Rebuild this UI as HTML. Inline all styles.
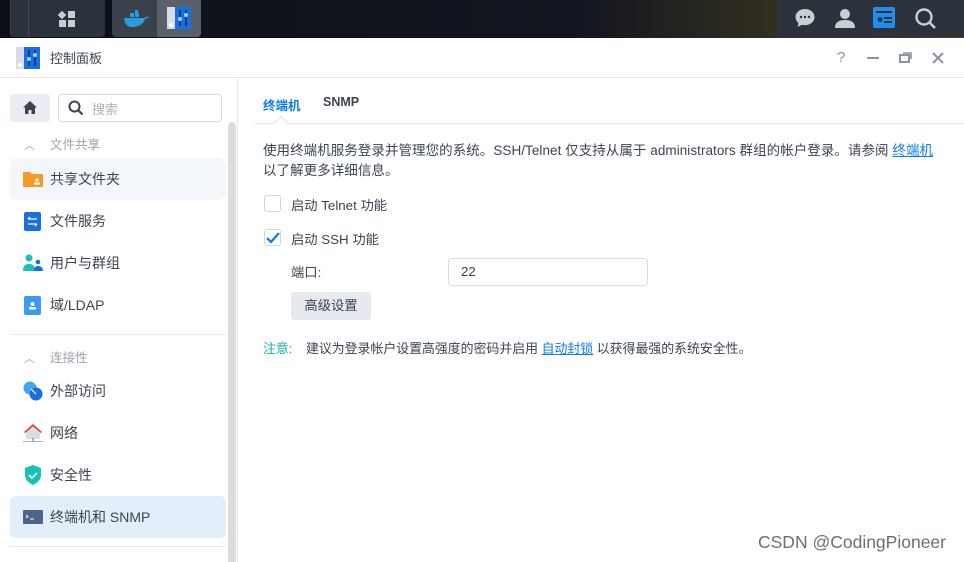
<!DOCTYPE html>
<html><head><meta charset="utf-8"><style>
*{margin:0;padding:0;box-sizing:border-box}
body{width:964px;height:562px;overflow:hidden;background:#fff;font-family:"Liberation Sans","Noto Sans CJK SC",sans-serif;position:relative;color:#3a4452}
.abs{position:absolute}
.top{left:0;top:0;width:964px;height:38px;background:linear-gradient(90deg,#0b0f16 0%,#121620 60%,#3a3420 85%,#4a3f22 100%)}
.tb{background:#2c323b;border-radius:0 0 4px 4px}
.side{left:0;top:78px;width:238px;height:484px;border-right:1px solid #e3e7ec}
.item{position:absolute;left:10px;width:216px;height:42px;border-radius:6px;font-size:14px;line-height:42px;padding-left:40px;color:#3a4452}
.ic{position:absolute;left:13px;top:11px;width:20px;height:20px}
.sec{position:absolute;left:24px;font-size:12.5px;color:#9aa3ad}
.sec span{display:inline-block;width:10px;margin-right:16px;font-size:11px}
.hr{position:absolute;left:10px;width:216px;height:1px;background:#e6e9ee}
.t{font-size:13.3px;color:#3a4452}
.cb{position:absolute;width:17px;height:17px;border:1px solid #cfd6de;border-radius:3px;background:#fff}
a{color:#0a7cf0}
</style></head><body>
<div class="abs top"></div>
<div class="abs tb" style="left:10px;top:0;width:95px;height:37px;border-left:1px solid #3c434d"></div>
<div class="abs" style="left:28px;top:0;width:1px;height:37px;background:#454c56"></div>
<svg class="abs" style="left:57px;top:9px" width="20" height="20" viewBox="0 0 20 20"><rect x="2" y="3" width="6" height="6" transform="rotate(45 5 6)" fill="#c9ced5"/><rect x="11" y="2" width="7" height="7" fill="#c9ced5"/><rect x="2" y="11" width="7" height="7" fill="#c9ced5"/><rect x="11" y="11" width="7" height="7" fill="#c9ced5"/></svg>
<div class="abs tb" style="left:112px;top:0;width:89px;height:37px;background:#3b414a"></div>
<div class="abs" style="left:157px;top:0;width:44px;height:37px;background:#59606a;border-radius:0 0 4px 0"></div>
<svg class="abs" style="left:122px;top:10px" width="28" height="18" viewBox="0 0 28 18"><path d="M2 8 H22 Q25 6 27 7 Q25 9 23 9 Q20 17 10 17 Q3 17 2 8Z" fill="#2a9de0"/><rect x="8" y="3" width="4" height="4" fill="#2a9de0"/><rect x="13" y="3" width="4" height="4" fill="#2a9de0"/><rect x="13" y="0" width="3" height="3" fill="#2a9de0"/></svg>
<svg class="abs" style="left:167px;top:6px" width="24" height="24" viewBox="0 0 24 24"><rect x="0" y="1" width="8" height="22" fill="#d8dde5"/><rect x="8" y="1" width="16" height="22" fill="#1a6fe0"/><circle cx="4" cy="19" r="2" fill="#fff"/><path d="M13 4V20M19 4V20" stroke="#0c2b70" stroke-width="1.5"/><circle cx="13" cy="13" r="2" fill="#9fd0ff"/><circle cx="19" cy="9" r="2" fill="#9fd0ff"/></svg>
<div class="abs tb" style="left:777px;top:0;width:187px;height:37px;border-radius:0 0 0 4px"></div>
<svg class="abs" style="left:794px;top:7px" width="22" height="22" viewBox="0 0 22 22"><path d="M11 2C5.5 2 1.5 5.6 1.5 10c0 2.4 1.2 4.5 3 6l-1 4 4.5-2.3c1 .3 2 .4 3 .4 5.5 0 9.5-3.6 9.5-8S16.5 2 11 2z" fill="#c9ced5"/><circle cx="7" cy="10" r="1.2" fill="#2c323b"/><circle cx="11" cy="10" r="1.2" fill="#2c323b"/><circle cx="15" cy="10" r="1.2" fill="#2c323b"/></svg>
<svg class="abs" style="left:834px;top:7px" width="22" height="22" viewBox="0 0 22 22"><circle cx="11" cy="7" r="5" fill="#c9ced5"/><path d="M1 21c0-6 4-8 10-8s10 2 10 8z" fill="#c9ced5"/></svg>
<svg class="abs" style="left:873px;top:7px" width="22" height="22" viewBox="0 0 22 22"><rect x="0" y="0" width="22" height="21" rx="2" fill="#1f8cf0"/><rect x="3" y="4" width="16" height="2" fill="#2c323b"/><circle cx="7" cy="12.5" r="2.5" fill="#2c323b"/><rect x="11" y="10" width="8" height="2" fill="#2c323b"/><rect x="11" y="14" width="8" height="2" fill="#2c323b"/></svg>
<svg class="abs" style="left:914px;top:7px" width="24" height="24" viewBox="0 0 24 24"><circle cx="10" cy="10" r="7.5" fill="none" stroke="#c9ced5" stroke-width="2.4"/><path d="M15.5 15.5L21 21" stroke="#c9ced5" stroke-width="2.6"/></svg>

<div class="abs" style="left:0;top:38px;width:964px;height:40px;border-bottom:1px solid #e3e7ec;background:#fff"></div>
<svg class="abs" style="left:16px;top:46px" width="24" height="24" viewBox="0 0 24 24"><rect x="0" y="1" width="8" height="22" fill="#d8dde5"/><rect x="8" y="1" width="16" height="22" fill="#1a6fe0"/><circle cx="4" cy="19" r="2" fill="#fff"/><path d="M13 4V20M19 4V20" stroke="#0c2b70" stroke-width="1.5"/><circle cx="13" cy="13" r="2" fill="#9fd0ff"/><circle cx="19" cy="9" r="2" fill="#9fd0ff"/></svg>
<div class="abs" style="left:50px;top:48px;font-size:13px;color:#3a4452">控制面板</div>
<div class="abs" style="left:837px;top:49px;font-size:15px;color:#8a939e">?</div>
<div class="abs" style="left:867px;top:57px;width:12px;height:2px;background:#8a939e"></div>
<svg class="abs" style="left:899px;top:51px" width="14" height="12" viewBox="0 0 14 12"><rect x="1" y="4" width="9" height="7" fill="none" stroke="#8a939e" stroke-width="2"/><path d="M4 2H12V8" fill="none" stroke="#8a939e" stroke-width="1.6"/></svg>
<svg class="abs" style="left:932px;top:52px" width="12" height="12" viewBox="0 0 12 12"><path d="M1 1L11 11M11 1L1 11" stroke="#8a939e" stroke-width="2"/></svg>

<div class="abs side">
<div class="abs" style="left:10px;top:16px;width:40px;height:28px;background:#e9edf2;border-radius:4px"></div>
<svg class="abs" style="left:22px;top:22px" width="16" height="15" viewBox="0 0 16 15"><path d="M8 1L1 7.5H3V14H6.5V10H9.5V14H13V7.5H15Z" fill="#3a4452"/></svg>
<div class="abs" style="left:58px;top:16px;width:164px;height:28px;border:1px solid #d5dbe2;border-radius:4px"></div>
<svg class="abs" style="left:68px;top:22px" width="16" height="16" viewBox="0 0 16 16"><circle cx="6.5" cy="6.5" r="5" fill="none" stroke="#3a4452" stroke-width="2"/><path d="M10 10L14.5 14.5" stroke="#3a4452" stroke-width="2.2"/></svg>
<div class="abs" style="left:92px;top:21px;font-size:13px;color:#aab2bb">搜索</div>
<div class="abs" style="left:228px;top:44px;width:8px;height:440px;background:#dcdcdc;border-radius:4px 4px 0 0"></div>
<div class="sec" style="top:56px"><span>︿</span>文件共享</div>
<div class="item" style="top:80px;background:#f3f7fb"><svg class="ic" viewBox="0 0 20 20"><path d="M0 3h7l2 2h11v13H0z" fill="#f79a28"/><circle cx="14" cy="11" r="1.6" fill="#fff"/><rect x="11" y="13.5" width="6" height="2" fill="#fff"/></svg>共享文件夹</div>
<div class="item" style="top:122px"><svg class="ic" viewBox="0 0 20 20"><rect x="1" y="1" width="17" height="19" rx="2" fill="#1a6fe0"/><path d="M5 8h9M5 8l2-2M14 13H5M14 13l-2 2" stroke="#fff" stroke-width="1.3" fill="none"/></svg>文件服务</div>
<div class="item" style="top:164px"><svg class="ic" viewBox="0 0 20 20"><circle cx="6" cy="5" r="3.5" fill="#16c0c0"/><path d="M0 18c0-6 3-7 6-7s6 1 6 7z" fill="#16c0c0"/><circle cx="15" cy="9" r="2.3" fill="#1a6fe0"/><path d="M11 18c0-4 2-5 4-5s5 1 5 5z" fill="#1a6fe0"/></svg>用户与群组</div>
<div class="item" style="top:206px"><svg class="ic" viewBox="0 0 20 20"><rect x="1" y="1" width="17" height="19" rx="2" fill="#3a9bf0"/><circle cx="9.5" cy="9" r="2" fill="#fff"/><rect x="6" y="12" width="7" height="2.5" fill="#fff"/></svg>域/LDAP</div>
<div class="hr" style="top:256px"></div>
<div class="sec" style="top:269px"><span>︿</span>连接性</div>
<div class="item" style="top:292px"><svg class="ic" viewBox="0 0 20 20"><circle cx="7" cy="7" r="6.5" fill="#3fa8f5"/><circle cx="13" cy="13" r="6.5" fill="#1a6fe0"/><path d="M8 8l5 5" stroke="#fff" stroke-width="1.2"/></svg>外部访问</div>
<div class="item" style="top:334px"><svg class="ic" viewBox="0 0 20 20"><path d="M10 1L1 9h2v7h14V9h2z" fill="#d9dde2"/><path d="M10 1L1 9l1.3 1L10 3.5 17.7 10 19 9z" fill="#e5483d"/><rect x="0" y="18" width="20" height="1" fill="#9fb4c8"/><rect x="9.5" y="15" width="1" height="3" fill="#1a6fe0"/></svg>网络</div>
<div class="item" style="top:376px"><svg class="ic" viewBox="0 0 20 20"><path d="M10 0L18 3v7c0 5-4 8-8 10-4-2-8-5-8-10V3z" fill="#14c1b8"/><path d="M6 10l3 3 5-5" stroke="#fff" stroke-width="1.6" fill="none"/></svg>安全性</div>
<div class="item" style="top:418px;background:#e3eefb"><svg class="ic" viewBox="0 0 20 20"><rect x="0" y="3" width="20" height="14" rx="1" fill="#4a6585"/><path d="M3 8l2 1.5L3 11M7 12h4" stroke="#fff" stroke-width="1" fill="none"/></svg>终端机和 SNMP</div>
<div class="hr" style="top:468px"></div>
</div>

<div class="abs" style="left:263px;top:95px;font-size:12.5px;font-weight:bold;color:#0a7cf0">终端机</div>
<div class="abs" style="left:323px;top:95px;font-size:12.5px;font-weight:bold;color:#3a4452">SNMP</div>
<div class="abs" style="left:255px;top:123px;width:709px;height:1px;background:#dfe4ea"></div>
<div class="abs" style="left:276px;top:118px;width:10px;height:10px;border-left:1px solid #dfe4ea;border-top:1px solid #dfe4ea;background:#fff;transform:rotate(45deg)"></div>
<div class="abs t" style="left:263px;top:141px;line-height:20px;width:700px;font-size:13.5px;letter-spacing:0.05px">使用终端机服务登录并管理您的系统。SSH/Telnet 仅支持从属于 administrators 群组的帐户登录。请参阅 <a href="#">终端机</a><br>以了解更多详细信息。</div>
<div class="cb" style="left:264px;top:195px"></div>
<div class="abs t" style="left:291px;top:195px">启动 Telnet 功能</div>
<div class="cb" style="left:264px;top:229px"></div>
<svg class="abs" style="left:265px;top:230px" width="16" height="16" viewBox="0 0 16 16"><path d="M2 8l4 4 8-9" stroke="#0a7cf0" stroke-width="2.2" fill="none"/></svg>
<div class="abs t" style="left:291px;top:229px">启动 SSH 功能</div>
<div class="abs t" style="left:291px;top:262px">端口:</div>
<div class="abs" style="left:448px;top:258px;width:200px;height:28px;border:1px solid #d5dbe2;border-radius:4px;font-size:13.3px;line-height:26px;padding-left:12px;color:#3a4452">22</div>
<div class="abs" style="left:291px;top:292px;width:80px;height:28px;background:#e6eaf0;border-radius:3px;font-size:13.3px;line-height:28px;text-align:center;color:#3a4452">高级设置</div>
<div class="abs t" style="left:263px;top:338px;font-size:12.9px;color:#14b0a8">注意:</div>
<div class="abs t" style="left:306px;top:338px;font-size:12.9px">建议为登录帐户设置高强度的密码并启用 <a href="#">自动封锁</a> 以获得最强的系统安全性。</div>
<div class="abs" style="left:758px;top:532px;font-size:17.5px;color:#6a6f75">CSDN @CodingPioneer</div>
</body></html>
